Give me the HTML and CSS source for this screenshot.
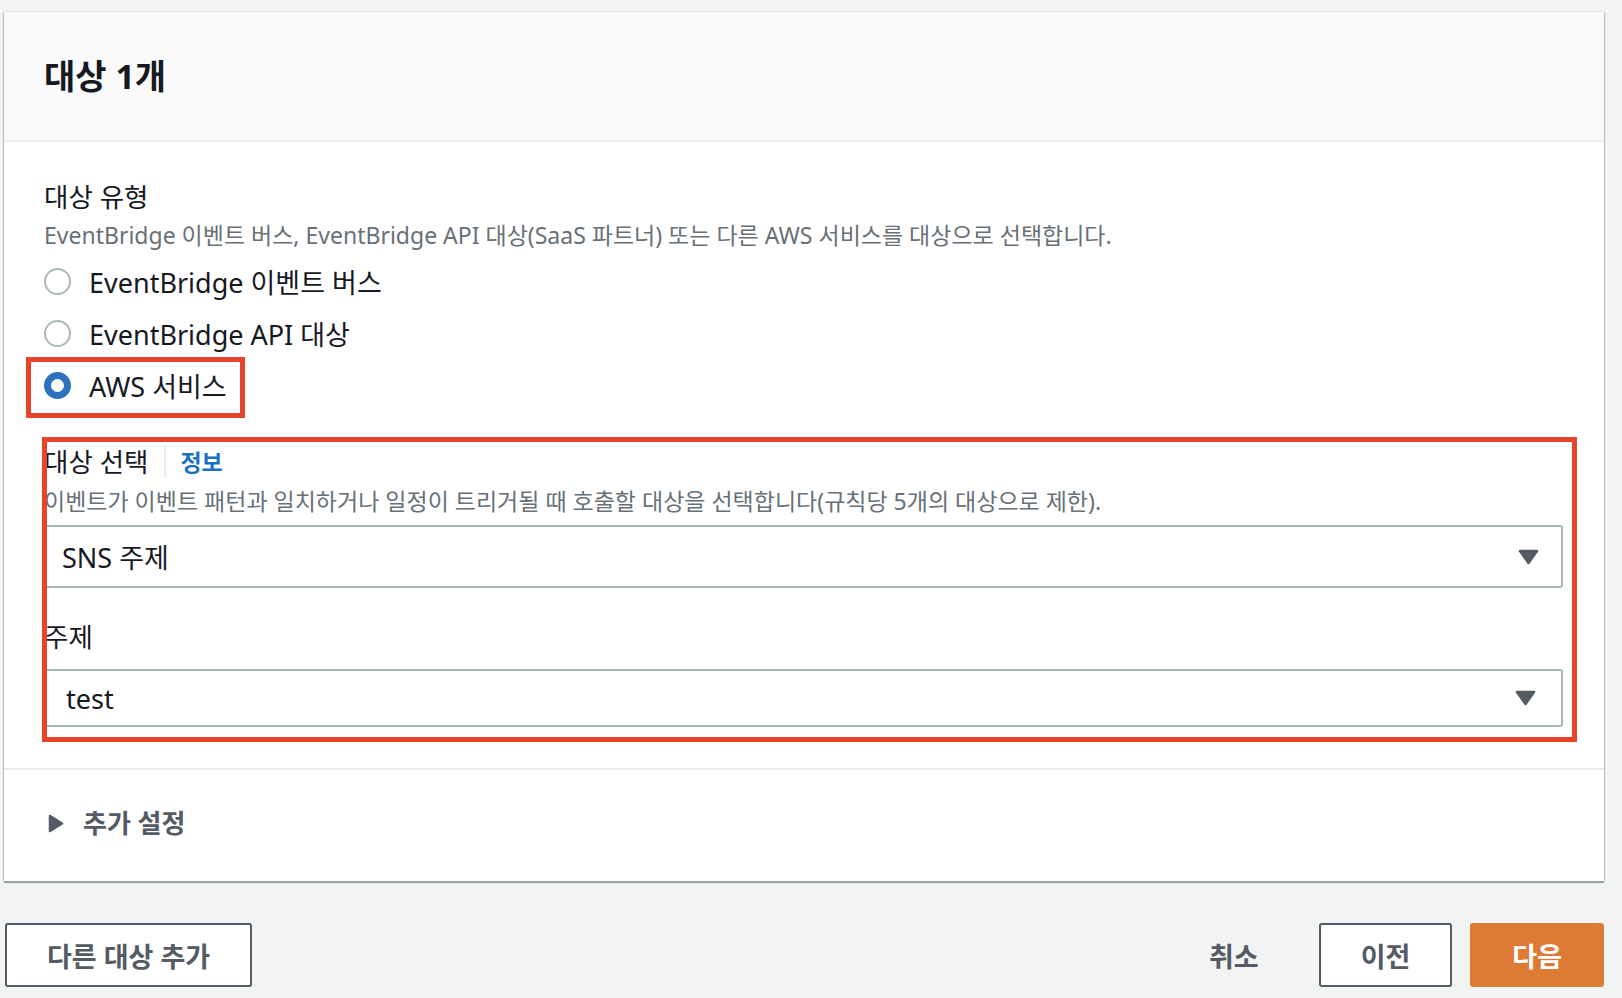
FILE: index.html
```html
<!DOCTYPE html>
<html lang="ko">
<head>
    <meta charset="UTF-8">
    <meta name="viewport" content="width=device-width, initial-scale=1.0">
    <title>대상 선택 - EventBridge</title>
    <link rel="stylesheet" href="styles.css">
</head>

<body>

    <div class="pagina">
        <section class="painel">
            <header class="painel-topo">
                <h2>대상 1개</h2>
            </header>

            <div class="painel-corpo">
                <!-- Tipo de destino -->
                <div class="campo">
                    <div class="campo-rotulo">대상 유형</div>
                    <div class="campo-descricao">EventBridge 이벤트 버스, EventBridge API 대상(SaaS 파트너) 또는 다른 AWS 서비스를 대상으로 선택합니다.</div>

                    <div class="grupo-radio">
                        <label class="opcao-radio">
                            <span class="radio"></span>
                            EventBridge 이벤트 버스
                        </label>
                        <label class="opcao-radio">
                            <span class="radio"></span>
                            EventBridge API 대상
                        </label>
                        <label class="opcao-radio marcado">
                            <span class="radio selecionado"></span>
                            AWS 서비스
                            <span class="destaque destaque-radio"></span>
                        </label>
                    </div>
                </div>

                <!-- Seleção do destino -->
                <div class="campo campo-destino">
                    <span class="destaque destaque-destino"></span>

                    <div class="campo-rotulo com-info">
                        대상 선택
                        <span class="divisor"></span>
                        <a href="#" class="link-info">정보</a>
                    </div>
                    <div class="campo-descricao">이벤트가 이벤트 패턴과 일치하거나 일정이 트리거될 때 호출할 대상을 선택합니다(규칙당 5개의 대상으로 제한).</div>

                    <div class="seletor seletor-grande">
                        <span>SNS 주제</span>
                        <svg class="seta" width="21" height="16" viewBox="0 0 21 16"><path d="M2 2 H19 L10.5 14 Z" fill="#545b64" stroke="#545b64" stroke-width="2.5" stroke-linejoin="round"/></svg>
                    </div>

                    <div class="campo-rotulo sub-rotulo">주제</div>
                    <div class="seletor seletor-menor">
                        <span>test</span>
                        <svg class="seta" width="21" height="16" viewBox="0 0 21 16"><path d="M2 2 H19 L10.5 14 Z" fill="#545b64" stroke="#545b64" stroke-width="2.5" stroke-linejoin="round"/></svg>
                    </div>
                </div>
            </div>

            <div class="painel-extra">
                <svg width="16" height="19" viewBox="0 0 16 19"><path d="M2 2 L14 9.5 L2 17 Z" fill="#545b64" stroke="#545b64" stroke-width="2.5" stroke-linejoin="round"/></svg>
                <span>추가 설정</span>
            </div>
        </section>

        <div class="acoes">
            <button class="btn">다른 대상 추가</button>
            <div class="acoes-direita">
                <button class="btn btn-link">취소</button>
                <button class="btn">이전</button>
                <button class="btn btn-primario">다음</button>
            </div>
        </div>
    </div>

</body>
</html>
```

FILE: styles.css
```css
* {
    font-family: "Noto Sans", "Noto Sans CJK KR", sans-serif;
    margin: 0;
    padding: 0;
    box-sizing: border-box;
}

body {
    background-color: #f2f3f3;
    color: #16191f;
}

.pagina {
    padding: 12px 18px 0 4px;
}

/* Painel principal */
.painel {
    background-color: #fff;
    box-shadow: 0 2px 1px rgba(0, 28, 36, 0.35), -1px 0 1px rgba(0, 28, 36, 0.18), 1px 0 1px rgba(0, 28, 36, 0.18);
}

.painel-topo {
    height: 130px;
    display: flex;
    align-items: center;
    padding: 0 40px;
    background-color: #fafafa;
    border-bottom: 2px solid #eaeded;
}

.painel-topo h2 {
    font-size: 34px;
    font-weight: 700;
    line-height: 40px;
}

.painel-corpo {
    padding: 40px 41px 41px 40px;
}

.campo-rotulo {
    font-size: 26.5px;
    line-height: 30px;
}

.campo-descricao {
    font-size: 23px;
    line-height: 28px;
    margin-top: 9px;
    color: #687078;
}

/* Botões de opção */
.grupo-radio {
    margin-top: 6px;
}

.opcao-radio {
    height: 52px;
    display: flex;
    align-items: center;
    gap: 18px;
    font-size: 27px;
}

.radio {
    width: 27px;
    height: 27px;
    flex-shrink: 0;
    border-radius: 50%;
    border: 2px solid #aab7b8;
    background-color: #fff;
}

.radio.selecionado {
    border: 7px solid #2d72bd;
}

.marcado {
    position: relative;
}

/* Caixas vermelhas de destaque */
.destaque {
    position: absolute;
    border: 5px solid #e8432b;
    pointer-events: none;
    z-index: 2;
}

.destaque-radio {
    top: -2px;
    left: -18px;
    width: 219px;
    height: 61px;
}

.campo-destino {
    position: relative;
    margin-top: 35px;
}

.destaque-destino {
    top: -9px;
    left: -2px;
    right: -14px;
    bottom: -15px;
}

.com-info {
    display: flex;
    align-items: center;
}

.divisor {
    width: 2px;
    height: 32px;
    margin: 0 14px 0 16px;
    background-color: #eaeded;
}

.link-info {
    font-size: 23px;
    font-weight: 700;
    color: #1d6fbf;
    text-decoration: none;
}

/* Seletores */
.seletor {
    display: flex;
    align-items: center;
    justify-content: space-between;
    border: 2px solid #aab7b8;
    border-radius: 3px;
    font-size: 27px;
    padding: 0 22px 0 16px;
}

.seletor-grande {
    height: 63px;
    margin-top: 10px;
}

.sub-rotulo {
    margin-top: 34px;
}

.seletor-menor {
    height: 58px;
    margin-top: 17px;
    padding: 0 25px 0 20px;
}

.seta {
    display: block;
}

/* Configurações adicionais */
.painel-extra {
    display: flex;
    align-items: center;
    gap: 19px;
    padding: 38px 40px 43px 44px;
    border-top: 2px solid #eaeded;
    font-size: 26px;
    line-height: 30px;
    font-weight: 700;
    color: #545b64;
}

/* Botões do rodapé */
.acoes {
    display: flex;
    justify-content: space-between;
    margin-top: 42px;
    padding-left: 1px;
}

.acoes-direita {
    display: flex;
    gap: 18px;
}

.btn {
    height: 64px;
    padding: 0 40px;
    font-size: 27px;
    font-weight: 700;
    color: #545b64;
    background-color: #fff;
    border: 2px solid #545b64;
    border-radius: 3px;
    cursor: pointer;
}

.btn-link {
    background-color: transparent;
    border-color: transparent;
}

.btn-primario {
    background-color: #dd7a35;
    border-color: #dd7a35;
    color: #fff;
}
```
